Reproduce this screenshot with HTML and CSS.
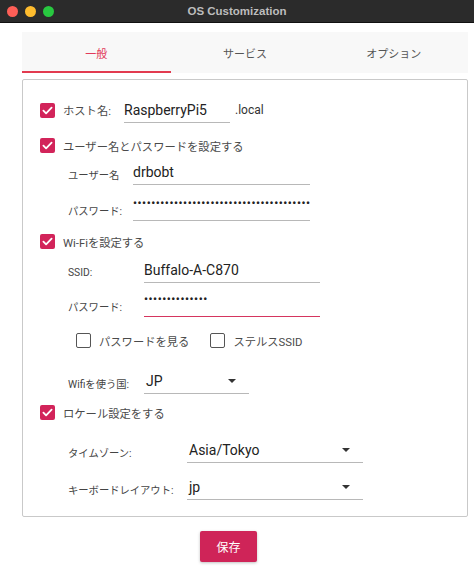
FILE: index.html
```html
<!DOCTYPE html>
<html lang="ja">
<head>
<meta charset="UTF-8">
<title>OS Customization</title>
<link rel="stylesheet" href="styles.css">
</head>
<body>
<header class="titlebar">
  <div class="lights">
    <i class="dot red"></i><i class="dot yellow"></i><i class="dot green"></i>
  </div>
  <div class="title">OS Customization</div>
  <div></div>
</header>

<main class="window">
  <nav class="tabs">
    <div class="tab active">一般</div>
    <div class="tab">サービス</div>
    <div class="tab">オプション</div>
  </nav>

  <section class="panel">
    <!-- ホスト名 -->
    <div class="row r-host">
      <span class="cb on"><svg viewBox="0 0 15 15"><path d="M3.4 7.6l2.7 2.7 5.5-5.6"/></svg></span>
      <span class="cb-label w-host">ホスト名:</span>
      <span class="field f-host">RaspberryPi5</span>
      <span class="suffix">.local</span>
    </div>

    <!-- ユーザー -->
    <div class="row cb-row r-user">
      <span class="cb on"><svg viewBox="0 0 15 15"><path d="M3.4 7.6l2.7 2.7 5.5-5.6"/></svg></span>
      <span class="cb-label">ユーザー名とパスワードを設定する</span>
    </div>
    <div class="row sub r-uname">
      <span class="lbl w-user">ユーザー名</span>
      <span class="field f-user">drbobt</span>
    </div>
    <div class="row sub r-upass">
      <span class="lbl w-user">パスワード:</span>
      <span class="field f-user pw"><span class="dots">•••••••••••••••••••••••••••••••••••••••</span></span>
    </div>

    <!-- Wi-Fi -->
    <div class="row cb-row r-wifi">
      <span class="cb on"><svg viewBox="0 0 15 15"><path d="M3.4 7.6l2.7 2.7 5.5-5.6"/></svg></span>
      <span class="cb-label">Wi-Fiを設定する</span>
    </div>
    <div class="row sub r-ssid">
      <span class="lbl w-wifi">SSID:</span>
      <span class="field f-wifi">Buffalo-A-C870</span>
    </div>
    <div class="row sub r-wpass">
      <span class="lbl w-wifi">パスワード:</span>
      <span class="field f-wifi pw focus"><span class="dots">••••••••••••••</span></span>
    </div>
    <div class="row cb-row r-opts">
      <span class="cb off"></span>
      <span class="cb-label">パスワードを見る</span>
      <span class="cb off second"></span>
      <span class="cb-label">ステルスSSID</span>
    </div>
    <div class="row sub r-country">
      <span class="lbl w-wifi">Wifiを使う国:</span>
      <span class="field select f-country">JP<i class="caret"></i></span>
    </div>

    <!-- ロケール -->
    <div class="row cb-row r-locale">
      <span class="cb on"><svg viewBox="0 0 15 15"><path d="M3.4 7.6l2.7 2.7 5.5-5.6"/></svg></span>
      <span class="cb-label">ロケール設定をする</span>
    </div>
    <div class="row sub r-tz">
      <span class="lbl w-locale">タイムゾーン:</span>
      <span class="field select f-locale">Asia/Tokyo<i class="caret"></i></span>
    </div>
    <div class="row sub r-kb">
      <span class="lbl w-locale">キーボードレイアウト:</span>
      <span class="field select f-locale">jp<i class="caret"></i></span>
    </div>
  </section>

  <div class="actions">
    <button class="btn-save">保存</button>
  </div>
</main>
</body>
</html>
```

FILE: styles.css
```css
body{margin:0;background:#fff;font-family:Roboto,"Noto Sans CJK JP",sans-serif;color:#222;width:474px;height:576px;overflow:hidden}

/* --- barra de titulo --- */
.titlebar{display:grid;grid-template-columns:1fr auto 1fr;align-items:center;height:22px;background:#2b2b2b;border-bottom:1px solid #111}
.lights{display:flex;gap:7px;padding-left:7px}
.dot{width:11px;height:11px;border-radius:50%;display:block}
.red{background:#fe5f57}
.yellow{background:#febc2e}
.green{background:#28c840}
.title{font-family:"Liberation Sans",Arial,sans-serif;font-weight:bold;font-size:11.5px;color:#bdbdbd}

.window{padding:9px 6px 0 22px}

/* --- pestañas --- */
.tabs{display:grid;grid-template-columns:1fr 1fr 1fr;height:41px;background:#f8f8f8}
.tab{display:flex;align-items:center;justify-content:center;font-size:11px;color:#555;box-sizing:border-box}
.tab.active{color:#e23a5a;border-bottom:2px solid #e23a4f;padding-top:2px}

/* --- panel --- */
.panel{margin-top:6px;border:1px solid #c9c9c9;border-radius:2px;padding:17px 0 16px 17px}
.row{display:flex;align-items:center;height:25px}
.r-host{height:26px}
.r-user{margin-top:10px}
.r-uname{margin-top:2px}
.r-upass{margin-top:11px}
.r-wifi{margin-top:8px}
.r-ssid{margin-top:4px}
.r-wpass{margin-top:9px}
.r-opts{margin-top:11px;padding-left:36px}
.r-country{margin-top:16px}
.r-locale{margin-top:6px}
.r-tz{margin-top:13px}
.r-kb{margin-top:12px}
.sub{padding-left:28px}

.cb{width:15px;height:15px;box-sizing:border-box;border-radius:2px;flex:none;display:block}
.cb.on{background:#d2245a}
.cb.on svg{display:block;width:15px;height:15px}
.cb.on path{fill:none;stroke:#fff;stroke-width:1.8;stroke-linecap:round;stroke-linejoin:round}
.cb.off{border:1.5px solid #555}
.cb.second{margin-left:21px}
.cb-label{font-size:11.3px;color:#4a4a4a;margin-left:8px}
.w-host{width:61px;margin-left:8px}

.lbl{font-size:10.3px;color:#444;flex:none;padding-top:3px}
.w-user{width:65px}
.w-wifi{width:76px}
.w-locale{width:119px}

.field{display:flex;align-items:center;box-sizing:border-box;height:25px;border-bottom:1px solid #b8b8b8;font-size:14px;color:#222;overflow:hidden;white-space:nowrap}
.r-host .field{height:26px}
.f-host{width:106px}
.f-user{width:177px}
.f-wifi{width:176px}
.f-country{width:105px}
.f-locale{width:176px}
.field.focus{border-bottom-color:#d5355f}
.field.pw{align-items:flex-start}
.dots{font-size:11px;font-weight:bold;letter-spacing:0.6px;line-height:14px;margin-top:1px}
.suffix{font-size:12px;color:#333;margin-left:5px}

.select{padding:0 13px 0 2px;justify-content:space-between}
.caret{width:0;height:0;border-left:4px solid transparent;border-right:4px solid transparent;border-top:4px solid #333}

/* --- boton --- */
.actions{display:flex;padding-left:178px;margin-top:14px}
.btn-save{width:57px;height:31px;border:none;border-radius:2px;background:#cf2458;color:#fff;font-family:"Noto Sans CJK JP",sans-serif;font-size:12px;box-shadow:0 1px 3px rgba(0,0,0,.25)}
```
